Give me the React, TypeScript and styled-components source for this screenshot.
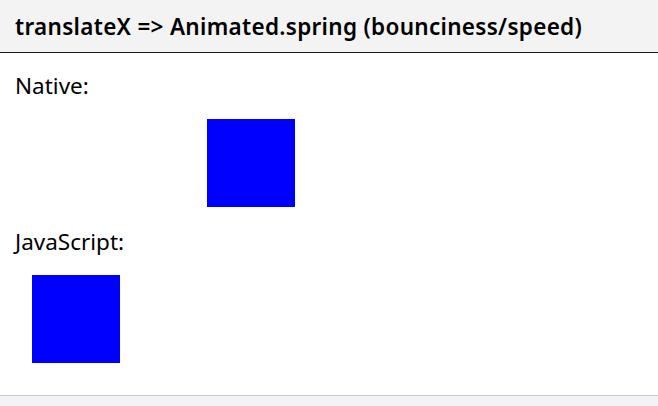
import React from "react";
import styled, { createGlobalStyle } from "styled-components";

const Global = createGlobalStyle`
  html, body { margin: 0; padding: 0; background: #ffffff; }
  body { font-family: "Noto Sans", "Open Sans", sans-serif; }
  #root { height: 406px; }
`;

const Page = styled.div`
  display: flex;
  flex-direction: column;
  width: 658px;
  height: 406px;
  background: #ffffff;
`;

const Header = styled.div`
  height: 53px;
  box-sizing: border-box;
  background: #f3f3f3;
  border-bottom: 1px solid #1a1a1a;
  display: flex;
  align-items: center;
  padding: 0 15px;
`;

const Title = styled.h1`
  margin: 0;
  font-size: 22.5px;
  letter-spacing: 0.3px;
  font-weight: 600;
  color: #000000;
  white-space: nowrap;
`;

const Content = styled.div`
  flex: 1;
  display: flex;
  flex-direction: column;
  padding: 18px 15px 0;
`;

const Section = styled.div`
  display: flex;
  flex-direction: column;
  margin-bottom: 20px;
`;

const Label = styled.div`
  font-size: 22.5px;
  line-height: 30px;
  color: #000000;
`;

const Box = styled.div<{ $offset: number }>`
  width: 88px;
  height: 88px;
  background: #0000ff;
  margin-top: 18px;
  transform: translateX(${(p) => p.$offset}px);
`;

const Footer = styled.div`
  height: 10px;
  background: #f2f2f7;
  border-top: 1px solid #c8c8c8;
`;

export default function App() {
  return (
    <>
      <Global />
      <Page>
        <Header>
          <Title>translateX =&gt; Animated.spring (bounciness/speed)</Title>
        </Header>
        <Content>
          <Section>
            <Label>Native:</Label>
            <Box $offset={192} />
          </Section>
          <Section>
            <Label>JavaScript:</Label>
            <Box $offset={17} />
          </Section>
        </Content>
        <Footer />
      </Page>
    </>
  );
}
